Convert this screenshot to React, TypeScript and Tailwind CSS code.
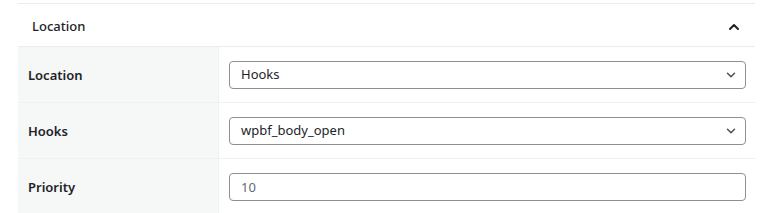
import React from 'react'
import { ChevronDown, ChevronUp } from 'lucide-react'

interface Row {
    label: string
    value: string
    kind: 'select' | 'input'
}

const rows: Row[] = [
    { label: 'Location', value: 'Hooks', kind: 'select' },
    { label: 'Hooks', value: 'wpbf_body_open', kind: 'select' },
    { label: 'Priority', value: '10', kind: 'input' },
]

export default function App() {
    return (
        <div className="w-[768px] h-[213px] overflow-hidden bg-white pt-[3px] pl-[18px] pr-[13px] text-[13px] text-[#1d2327]" style={{ fontFamily: '"Noto Sans", "Open Sans", sans-serif' }}>
            <div className="border-t border-[#ececec]">
                {/* Header */}
                <div className="h-[43px] flex items-center justify-between pl-[14px] pr-[13px] pt-[3px] border-b border-[#ececec]">
                    <span className="font-medium">Location</span>
                    <ChevronUp className="w-[16px] h-[16px] text-[#1d2327]" strokeWidth={3} />
                </div>

                {/* Rows */}
                {rows.map((row, idx) => (
                    <div
                        key={row.label}
                        className={`grid grid-cols-[201px_1fr] h-[56px] ${idx < rows.length - 1 ? 'border-b border-[#f0f0f0]' : ''}`}
                    >
                        <div className="bg-[#f6f7f7] border-r border-[#f0f0f0] flex items-center pl-[10px] pt-[2px] font-semibold">
                            {row.label}
                        </div>
                        <div className="flex items-center pl-[10px] pr-[9px]">
                            <div className="w-full h-[28px] border border-[#8c8f94] rounded-[4px] flex items-center justify-between pl-[11px] pr-[7px] pt-px">
                                <span className={row.kind === 'input' ? 'text-[#646970]' : ''}>{row.value}</span>
                                {row.kind === 'select' && (
                                    <ChevronDown className="w-[14px] h-[14px] text-[#50575e]" strokeWidth={2.75} />
                                )}
                            </div>
                        </div>
                    </div>
                ))}
            </div>
        </div>
    )
}
